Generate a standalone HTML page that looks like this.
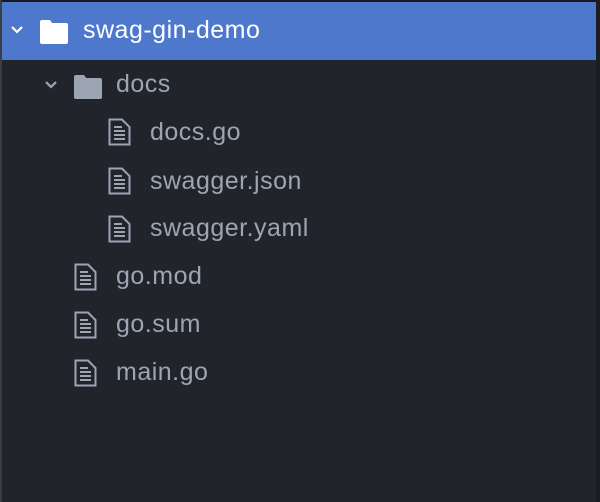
<!DOCTYPE html>
<html><head><style>
body{margin:0;width:600px;height:502px;background:#21252b;position:relative;overflow:hidden;font-family:"Liberation Sans",sans-serif}
.top{position:absolute;left:0;top:0;width:600px;height:2px;background:#181a1f}
.lb{position:absolute;left:0;top:0;width:2px;height:502px;background:#3a3e45}
.rb{position:absolute;right:0;top:0;width:4px;height:502px;background:#1b1d22}
.sel{position:absolute;left:2px;top:2px;width:594px;height:58px;background:#4d78cc}
.t{position:absolute;font-size:25px;letter-spacing:0.5px;color:#9da5b4;line-height:28px}
svg{position:absolute}
</style></head><body>
<div class="top"></div><div class="lb"></div><div class="rb"></div><div class="sel"></div>
<svg style="left:10px;top:25px" width="14" height="10"><path d="M2 2 L7 7 L12 2" fill="none" stroke="#fff" stroke-width="2.2"/></svg>
<svg style="left:39px;top:19px" width="30" height="26"><path d="M1 3 Q1 1 3 1 L11 1 L13 4 L27 4 Q29 4 29 6 L29 23 Q29 25 27 25 L3 25 Q1 25 1 23 Z" fill="#fff"/></svg>
<div class="t" style="left:83px;top:16px;color:#fff">swag-gin-demo</div>
<svg style="left:44px;top:80px" width="14" height="10"><path d="M2 2 L7 7 L12 2" fill="none" stroke="#9da5b4" stroke-width="2.2"/></svg>
<svg style="left:73px;top:74px" width="30" height="26"><path d="M1 3 Q1 1 3 1 L11 1 L13 4 L27 4 Q29 4 29 6 L29 23 Q29 25 27 25 L3 25 Q1 25 1 23 Z" fill="#9da5b4"/></svg>
<div class="t" style="left:116px;top:70px">docs</div>
<svg width="0" height="0"><defs><g id="f"><path d="M1.5 1.5 L14 1.5 L21.5 9 L21.5 26.5 L1.5 26.5 Z" fill="none" stroke="#9da5b4" stroke-width="2"/><path d="M6 9h8M6 13h11M6 17h11M6 21h11" stroke="#9da5b4" stroke-width="2"/></g></defs></svg>
<svg style="left:108px;top:118px" width="24" height="29"><use href="#f"/></svg>
<div class="t" style="left:150px;top:118px">docs.go</div>
<svg style="left:108px;top:167px" width="24" height="29"><use href="#f"/></svg>
<div class="t" style="left:150px;top:167px">swagger.json</div>
<svg style="left:108px;top:215px" width="24" height="29"><use href="#f"/></svg>
<div class="t" style="left:150px;top:214px">swagger.yaml</div>
<svg style="left:74px;top:263px" width="24" height="29"><use href="#f"/></svg>
<div class="t" style="left:116px;top:262px">go.mod</div>
<svg style="left:74px;top:311px" width="24" height="29"><use href="#f"/></svg>
<div class="t" style="left:116px;top:310px">go.sum</div>
<svg style="left:74px;top:359px" width="24" height="29"><use href="#f"/></svg>
<div class="t" style="left:116px;top:358px">main.go</div>
</body></html>
